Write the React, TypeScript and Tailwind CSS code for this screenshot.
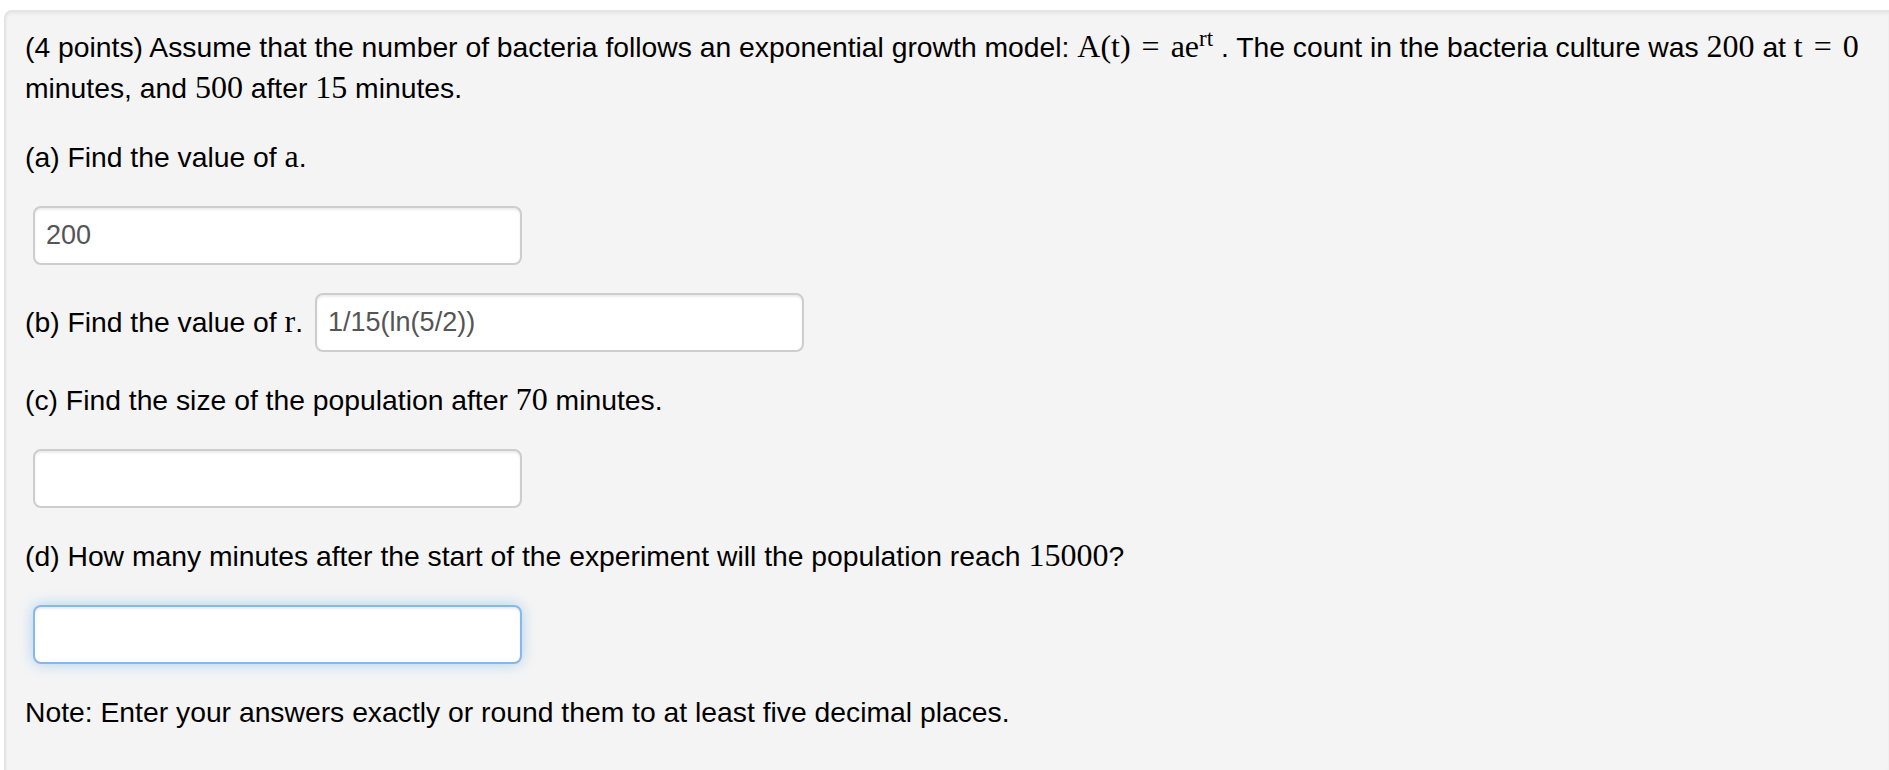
const sans = "font-['Liberation_Sans',Arial,Helvetica,sans-serif]";

function M({ children }: { children: React.ReactNode }) {
  // math set in a serif face, like the MathJax output
  return <span className="font-['Liberation_Serif','Times_New_Roman',serif] text-[32px] leading-none">{children}</span>;
}

function AnswerBox({ value = "", focused = false, className = "" }: { value?: string; focused?: boolean; className?: string }) {
  return (
    <input
      type="text"
      defaultValue={value}
      className={
        "h-[59px] w-[489px] rounded-[8px] border-2 bg-white pl-[11px] pr-3 text-[27px] text-[#555] outline-none " +
        sans +
        " " +
        (focused
          ? "border-[#86b8ea] shadow-[inset_0_2px_2px_rgba(0,0,0,0.075),0_0_14px_rgba(82,168,236,0.45)]"
          : "border-[#cdcdcd] shadow-[inset_0_2px_2px_rgba(0,0,0,0.075)]") +
        " " +
        className
      }
    />
  );
}

export default function App() {
  return (
    <div className={"flex h-[770px] flex-col overflow-hidden bg-white pl-[4px] pt-[10px] text-black " + sans}>
      <div className="flex flex-1 flex-col gap-[28px] rounded-tl-[8px] border-l-2 border-t-2 border-[#e4e4e4] bg-[#f4f4f4] pl-[19px] pt-[15px] text-[28.3px] leading-[41px] shadow-[inset_0_2px_3px_rgba(0,0,0,0.05)]">
        <p className="whitespace-nowrap">
          (4 points) Assume that the number of bacteria follows an exponential growth model:{" "}
          <M>
            A(t)<span className="mx-[3px]"> = </span>ae<span className="align-[11px] text-[23px] leading-none">rt</span>
          </M>{" "}
          . The count in the bacteria culture was <M>200</M> at{" "}
          <M>
            t<span className="mx-[3px]"> = </span>0
          </M>
          <br />
          minutes, and <M>500</M> after <M>15</M> minutes.
        </p>

        <p>
          (a) Find the value of <M>a</M>.
        </p>
        <div>
          <AnswerBox value="200" className="ml-[8px]" />
        </div>

        <div className="flex items-center">
          <span>
            (b) Find the value of <M>r</M>.
          </span>
          <AnswerBox value="1/15(ln(5/2))" className="ml-[12px]" />
        </div>

        <p>
          (c) Find the size of the population after <M>70</M> minutes.
        </p>
        <div>
          <AnswerBox className="ml-[8px]" />
        </div>

        <p>
          (d) How many minutes after the start of the experiment will the population reach <M>15000</M>?
        </p>
        <div>
          <AnswerBox focused className="ml-[8px]" />
        </div>

        <p>Note: Enter your answers exactly or round them to at least five decimal places.</p>
      </div>
    </div>
  );
}
